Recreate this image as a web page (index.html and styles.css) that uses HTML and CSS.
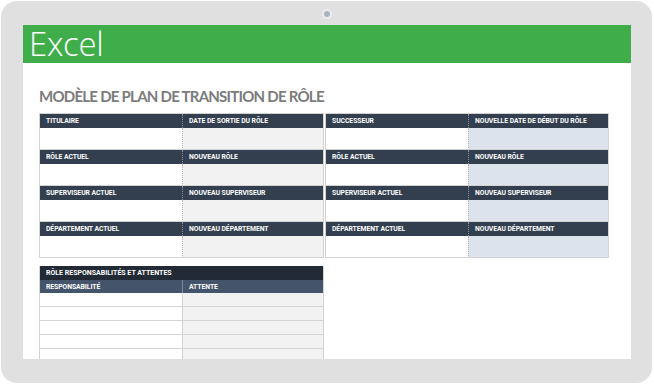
FILE: index.html
```html
<!DOCTYPE html>
<html lang="fr">
<head>
<meta charset="utf-8">
<title>Modèle de plan de transition de rôle</title>
<link rel="stylesheet" href="styles.css">
</head>
<body>
<div class="device">
  <div class="camera"></div>
  <div class="screen">
    <div class="appbar"><span class="app-name">Excel</span></div>
    <div class="sheet">
      <h1 class="title">MODÈLE DE PLAN DE TRANSITION DE RÔLE</h1>
      <div class="top-grid">
        <div class="card card-left">
          <div class="hc">TITULAIRE</div><div class="hc hc2">DATE DE SORTIE DU RÔLE</div>
          <div class="dc"></div><div class="dc dc2"></div>
          <div class="hc">RÔLE ACTUEL</div><div class="hc hc2">NOUVEAU RÔLE</div>
          <div class="dc"></div><div class="dc dc2"></div>
          <div class="hc">SUPERVISEUR ACTUEL</div><div class="hc hc2">NOUVEAU SUPERVISEUR</div>
          <div class="dc"></div><div class="dc dc2"></div>
          <div class="hc">DÉPARTEMENT ACTUEL</div><div class="hc hc2">NOUVEAU DÉPARTEMENT</div>
          <div class="dc"></div><div class="dc dc2"></div>
        </div>
        <div class="card card-right">
          <div class="hc">SUCCESSEUR</div><div class="hc hc2">NOUVELLE DATE DE DÉBUT DU RÔLE</div>
          <div class="dc"></div><div class="dc dc2"></div>
          <div class="hc">RÔLE ACTUEL</div><div class="hc hc2">NOUVEAU RÔLE</div>
          <div class="dc"></div><div class="dc dc2"></div>
          <div class="hc">SUPERVISEUR ACTUEL</div><div class="hc hc2">NOUVEAU SUPERVISEUR</div>
          <div class="dc"></div><div class="dc dc2"></div>
          <div class="hc">DÉPARTEMENT ACTUEL</div><div class="hc hc2">NOUVEAU DÉPARTEMENT</div>
          <div class="dc"></div><div class="dc dc2"></div>
        </div>
      </div>
      <div class="resp">
        <div class="resp-title">RÔLE RESPONSABILITÉS ET ATTENTES</div>
        <div class="sh">RESPONSABILITÉ</div><div class="sh sh2">ATTENTE</div>
        <div class="rc"></div><div class="rc rc2"></div>
        <div class="rc"></div><div class="rc rc2"></div>
        <div class="rc"></div><div class="rc rc2"></div>
        <div class="rc"></div><div class="rc rc2"></div>
        <div class="rc"></div><div class="rc rc2"></div>
        <div class="rc"></div><div class="rc rc2"></div>
      </div>
    </div>
  </div>
</div>
</body>
</html>
```

FILE: styles.css
```css
html, body {
  margin: 0;
  padding: 0;
  background: #ffffff;
}

.device {
  box-sizing: border-box;
  width: 651px;
  height: 382px;
  margin: 1px 0 0 1px;
  padding: 8px 21px 0 22px;
  background: #e0e0e0;
  border-radius: 16px;
}

.camera {
  width: 6px;
  height: 6px;
  margin: 0 auto 6px;
  border: 2px solid #eceef1;
  border-radius: 50%;
  background: #a9b2bf;
}

.screen {
  height: 334px;
  background: #ffffff;
}

.appbar {
  height: 38px;
  background: #3fae4a;
  padding-left: 6px;
}

.app-name {
  font-family: "Open Sans", sans-serif;
  font-weight: 300;
  font-size: 33px;
  line-height: 38px;
  letter-spacing: -0.3px;
  color: #ffffff;
}

.sheet {
  height: 296px;
  box-sizing: border-box;
  overflow: hidden;
  padding: 24px 22px 0 16px;
}

.title {
  margin: 0 0 8px;
  font-family: Lato, sans-serif;
  font-weight: 700;
  font-size: 15px;
  line-height: 18px;
  letter-spacing: -0.75px;
  color: #7b7b7b;
}

.top-grid {
  display: grid;
  grid-template-columns: 285px 284px;
  column-gap: 1px;
}

.card {
  display: grid;
  grid-template-columns: 142px 1fr;
  border: 1px solid #d3d3d3;
  border-bottom: 0;
}

.hc {
  display: flex;
  align-items: center;
  height: 14px;
  padding-left: 6px;
  background: #333f4f;
  color: #ffffff;
  font-family: Roboto, sans-serif;
  font-weight: 700;
  font-size: 6.8px;
  letter-spacing: -0.05px;
  white-space: nowrap;
}

.hc2 {
  border-left: 1px dotted #8b95a3;
}

.dc {
  height: 21px;
  border-bottom: 1px solid #d3d3d3;
  background: #ffffff;
}

.dc2 {
  border-left: 1px dotted #b5b5b5;
  background: #f2f2f2;
}

.card-right .dc2 {
  background: #dde3ec;
}

.resp {
  display: grid;
  grid-template-columns: 142px 1fr;
  width: 285px;
  margin-top: 8px;
  border-left: 1px solid #d3d3d3;
  border-right: 1px solid #d3d3d3;
  box-sizing: border-box;
}

.resp-title {
  grid-column: 1 / -1;
  display: flex;
  align-items: center;
  height: 14px;
  padding-left: 6px;
  background: #222a35;
  color: #ffffff;
  font-family: Roboto, sans-serif;
  font-weight: 700;
  font-size: 7px;
}

.sh {
  display: flex;
  align-items: center;
  height: 13px;
  padding-left: 6px;
  background: #44546a;
  color: #ffffff;
  font-family: Roboto, sans-serif;
  font-weight: 700;
  font-size: 6.8px;
  letter-spacing: -0.05px;
}

.sh2 {
  border-left: 1px solid #7d8ba0;
}

.rc {
  height: 13px;
  border-bottom: 1px solid #d3d3d3;
  background: #ffffff;
}

.rc2 {
  border-left: 1px solid #d3d3d3;
  background: #f2f2f2;
}
```
